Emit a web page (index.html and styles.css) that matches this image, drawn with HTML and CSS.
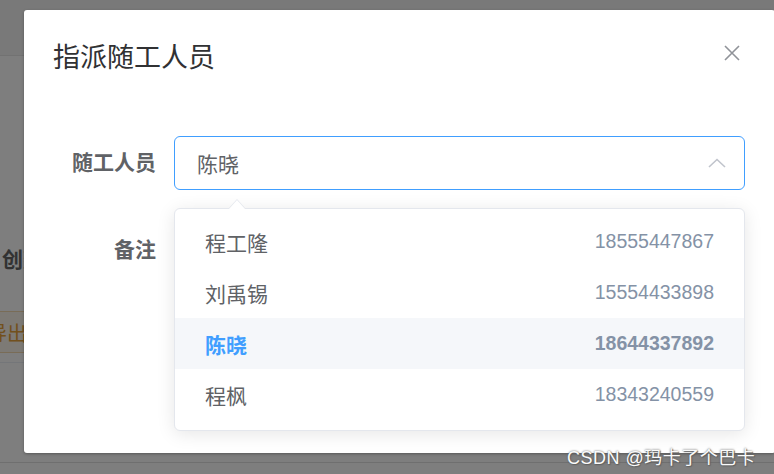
FILE: index.html
```html
<!DOCTYPE html>
<html lang="zh-CN">
<head>
  <meta charset="UTF-8" />
  <meta name="viewport" content="width=device-width, initial-scale=1.0" />
  <title>指派随工人员</title>
  <link rel="stylesheet" href="styles.css">
</head>
<body>
  <div class="page">
    <div class="page-head"></div>
    <div class="page-body">
      <div class="search-row"><span class="search-label">创建时间</span></div>
      <div class="toolbar"><button class="btn-warning">导出</button></div>
      <div class="table-head"></div>
      <div class="table-row"></div>
    </div>
  </div>

  <div class="mask"></div>

  <div class="dialog">
    <div class="dialog-header">
      <span class="dialog-title">指派随工人员</span>
      <button class="dialog-close" aria-label="关闭">
        <svg width="16" height="16" viewBox="0 0 16 16">
          <path d="M1 1 L15 15 M15 1 L1 15" stroke="#909399" stroke-width="1.6" fill="none"/>
        </svg>
      </button>
    </div>
    <div class="dialog-body">
      <div class="form-item">
        <label class="form-label">随工人员</label>
        <div class="form-content">
          <div class="select">
            <div class="select-input">
              <span>陈晓</span>
              <svg class="caret" width="18" height="10" viewBox="0 0 18 10">
                <path d="M1 9 L9 1.5 L17 9" stroke="#c0c4cc" stroke-width="1.6" fill="none"/>
              </svg>
            </div>
            <div class="dropdown">
              <div class="dropdown-arrow"></div>
              <ul class="options">
                <li class="option"><span>程工隆</span><span class="phone">18555447867</span></li>
                <li class="option"><span>刘禹锡</span><span class="phone">15554433898</span></li>
                <li class="option selected"><span>陈晓</span><span class="phone">18644337892</span></li>
                <li class="option"><span>程枫</span><span class="phone">18343240559</span></li>
              </ul>
            </div>
          </div>
        </div>
      </div>
      <div class="form-item">
        <label class="form-label">备注</label>
        <div class="form-content">
          <textarea class="textarea" rows="2"></textarea>
        </div>
      </div>
    </div>
  </div>

  <div class="watermark">CSDN @玛卡了个巴卡</div>
</body>
</html>
```

FILE: styles.css
```css
* {
  box-sizing: border-box;
}
body {
  margin: 0;
  width: 774px;
  height: 474px;
  overflow: hidden;
  position: relative;
  background: #fff;
  font-family: "Liberation Sans", "Noto Sans CJK SC", sans-serif;
}

/* page behind the mask */
.page-head {
  height: 56px;
  background: #f4f4f4;
  border-bottom: 1px solid #e6e6e6;
}
.search-row {
  margin-top: 179px;
  height: 50px;
  line-height: 50px;
  padding-left: 2px;
}
.search-label {
  font-size: 21px;
  font-weight: bold;
  color: #666;
  white-space: nowrap;
}
.toolbar {
  margin-top: 26px;
  margin-left: -34px;
}
.btn-warning {
  height: 42px;
  padding: 0 20px;
  font-family: inherit;
  font-size: 20px;
  color: #e6a23c;
  background: #fdf6ec;
  border: 1px solid #f5dab1;
  border-radius: 4px;
}
.table-head {
  height: 10px;
  border-bottom: 1px solid #ebeef5;
}
.table-row {
  height: 100px;
  border-bottom: 1px solid #e0e0e0;
}

.mask {
  position: absolute;
  inset: 0;
  background: rgba(0, 0, 0, 0.505);
}

/* dialog */
.dialog {
  position: absolute;
  left: 24px;
  top: 10px;
  width: 751px;
  height: 443px;
  background: #fff;
  border-radius: 3px;
  box-shadow: 0 1px 3px rgba(0, 0, 0, 0.3);
}
.dialog-header {
  position: relative;
  padding: 30px 30px 15px 29px;
}
.dialog-title {
  font-size: 27px;
  line-height: 36px;
  color: #303133;
}
.dialog-close {
  position: absolute;
  top: 31px;
  right: 31px;
  width: 24px;
  height: 24px;
  padding: 4px;
  border: none;
  background: transparent;
}
.dialog-close svg {
  display: block;
}
.dialog-body {
  padding: 45px 30px;
}

.form-item {
  display: flex;
  margin-bottom: 33px;
}
.form-label {
  width: 120px;
  flex-shrink: 0;
  padding-right: 18px;
  text-align: right;
  line-height: 54px;
  font-size: 21px;
  font-weight: bold;
  color: #606266;
}
.form-content {
  flex: 1;
}

.select {
  position: relative;
}
.select-input {
  display: flex;
  align-items: center;
  justify-content: space-between;
  height: 54px;
  padding: 0 18px 0 22px;
  border: 1px solid #409eff;
  border-radius: 6px;
  font-size: 21px;
  color: #606266;
}
.caret {
  display: block;
}

.dropdown {
  position: absolute;
  left: 0;
  top: 72px;
  width: 100%;
  z-index: 2;
  background: #fff;
  border: 1px solid #e4e7ed;
  border-radius: 6px;
  box-shadow: 0 3px 18px rgba(0, 0, 0, 0.1);
}
.dropdown-arrow {
  position: absolute;
  top: -10px;
  left: 53px;
  width: 0;
  height: 0;
  border: 9px solid transparent;
  border-top: 0;
  border-bottom: 10px solid #e4e7ed;
}
.dropdown-arrow::after {
  content: "";
  position: absolute;
  left: -8px;
  top: 1px;
  border: 8px solid transparent;
  border-top: 0;
  border-bottom: 9px solid #fff;
}
.options {
  list-style: none;
  margin: 0;
  padding: 7px 0 10px;
}
.option {
  display: flex;
  justify-content: space-between;
  align-items: center;
  height: 51px;
  padding: 0 30px;
  font-size: 21px;
  color: #606266;
}
.option .phone {
  font-size: 19.5px;
  color: #8492a6;
}
.option.selected {
  background: #f5f7fa;
  color: #409eff;
  font-weight: bold;
}

.textarea {
  display: block;
  width: 100%;
  height: 80px;
  border: 1px solid #dcdfe6;
  border-radius: 6px;
  resize: none;
}

.watermark {
  position: absolute;
  left: 567px;
  top: 443px;
  font-size: 18px;
  letter-spacing: 0.5px;
  color: #fafafa;
  white-space: nowrap;
  text-shadow: 0 0 2px #555, 1px 1px 1px #666;
}
```
